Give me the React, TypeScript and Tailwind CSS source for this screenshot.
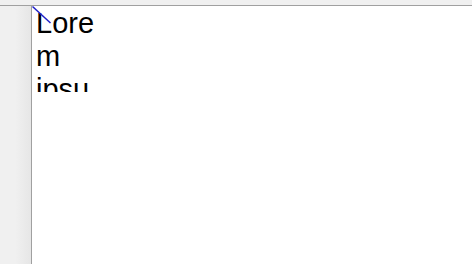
import React from "react";

export default function App() {
  return (
    <div className="relative w-[474px] h-[264px] bg-white overflow-hidden flex flex-col">
      <div className="h-[6px] w-[472px] bg-[#f0f0f0] border-b border-[#a0a0a0] shrink-0" />
      <div className="flex flex-1 min-h-0">
        <div className="w-[32px] bg-gradient-to-r from-[#f0f0f0] via-[#f0f0f0] to-[#e6e6e6] border-r border-[#a0a0a0] shrink-0" />
        <div className="flex-1 bg-white pl-[4px] pt-[1px]">
          <div
            className="w-[64px] h-[85px] overflow-hidden break-words text-[29px] leading-[33px] text-black"
            style={{ fontFamily: '"Liberation Sans", Arial, sans-serif' }}
          >
            Lorem ipsum dolor sit amet
          </div>
        </div>
      </div>
      <svg
        className="absolute left-0 top-0"
        width="60"
        height="30"
        viewBox="0 0 60 30"
      >
        <line x1="32.5" y1="6.5" x2="50.5" y2="23" stroke="#1e1ec8" strokeWidth="1.5" />
      </svg>
    </div>
  );
}
